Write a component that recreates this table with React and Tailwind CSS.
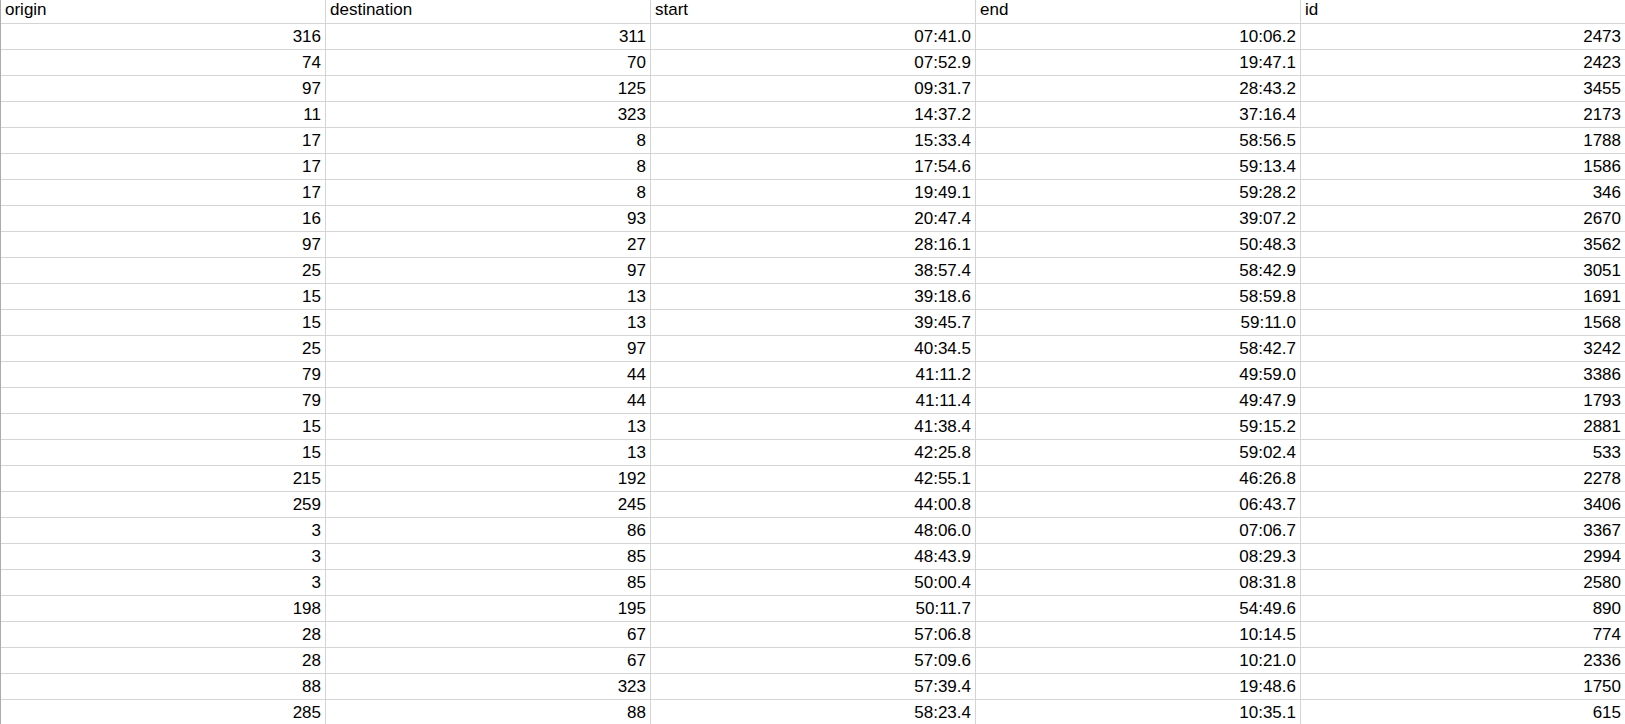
import React from 'react';

const headers = ['origin', 'destination', 'start', 'end', 'id'];

const rows = [
  ['316', '311', '07:41.0', '10:06.2', '2473'],
  ['74', '70', '07:52.9', '19:47.1', '2423'],
  ['97', '125', '09:31.7', '28:43.2', '3455'],
  ['11', '323', '14:37.2', '37:16.4', '2173'],
  ['17', '8', '15:33.4', '58:56.5', '1788'],
  ['17', '8', '17:54.6', '59:13.4', '1586'],
  ['17', '8', '19:49.1', '59:28.2', '346'],
  ['16', '93', '20:47.4', '39:07.2', '2670'],
  ['97', '27', '28:16.1', '50:48.3', '3562'],
  ['25', '97', '38:57.4', '58:42.9', '3051'],
  ['15', '13', '39:18.6', '58:59.8', '1691'],
  ['15', '13', '39:45.7', '59:11.0', '1568'],
  ['25', '97', '40:34.5', '58:42.7', '3242'],
  ['79', '44', '41:11.2', '49:59.0', '3386'],
  ['79', '44', '41:11.4', '49:47.9', '1793'],
  ['15', '13', '41:38.4', '59:15.2', '2881'],
  ['15', '13', '42:25.8', '59:02.4', '533'],
  ['215', '192', '42:55.1', '46:26.8', '2278'],
  ['259', '245', '44:00.8', '06:43.7', '3406'],
  ['3', '86', '48:06.0', '07:06.7', '3367'],
  ['3', '85', '48:43.9', '08:29.3', '2994'],
  ['3', '85', '50:00.4', '08:31.8', '2580'],
  ['198', '195', '50:11.7', '54:49.6', '890'],
  ['28', '67', '57:06.8', '10:14.5', '774'],
  ['28', '67', '57:09.6', '10:21.0', '2336'],
  ['88', '323', '57:39.4', '19:48.6', '1750'],
  ['285', '88', '58:23.4', '10:35.1', '615'],
];

const App = () => {
  return (
    <div className="w-[1625px] h-[724px] overflow-hidden bg-white text-black font-['Liberation_Sans',Arial,sans-serif] text-[17px]">
      <div className="border-l border-[#ababab] w-max">
        <div className="grid grid-cols-[repeat(5,325px)]">
          {headers.map((h) => (
            <div
              key={h}
              className="h-[24px] border-r border-b border-[#d4d4d4] flex items-end pl-[4px] pb-[3px] leading-[20px]"
            >
              {h}
            </div>
          ))}
        </div>
        {rows.map((row, i) => (
          <div key={i} className="grid grid-cols-[repeat(5,325px)]">
            {row.map((cell, j) => (
              <div
                key={j}
                className="h-[26px] border-r border-b border-[#d4d4d4] flex items-end justify-end pr-[4px] pb-[2px] leading-[20px]"
              >
                {cell}
              </div>
            ))}
          </div>
        ))}
      </div>
    </div>
  );
};

export default App;
